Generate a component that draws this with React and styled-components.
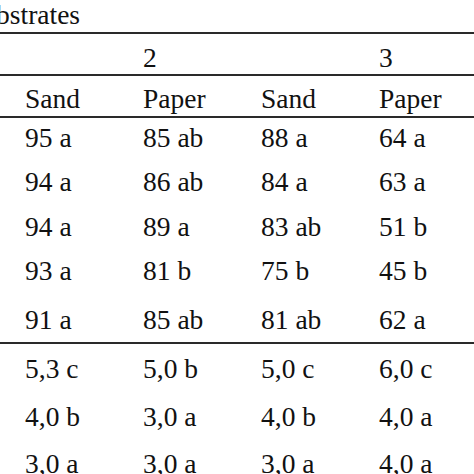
import React from 'react'
import styled, { createGlobalStyle } from 'styled-components'

const GlobalStyle = createGlobalStyle`
    html, body {
        margin: 0;
        padding: 0;
        background: #fff;
    }
    body {
        width: 474px;
        height: 474px;
        overflow: hidden;
        color: #111;
    }
`

const germination = [
    ['95 a', '85 ab', '88 a', '64 a'],
    ['94 a', '86 ab', '84 a', '63 a'],
    ['94 a', '89 a', '83 ab', '51 b'],
    ['93 a', '81 b', '75 b', '45 b'],
    ['91 a', '85 ab', '81 ab', '62 a'],
]

const speed = [
    ['5,3 c', '5,0 b', '5,0 c', '6,0 c'],
    ['4,0 b', '3,0 a', '4,0 b', '4,0 a'],
    ['3,0 a', '3,0 a', '3,0 a', '4,0 a'],
]

const App = () => {
    return (
        <>
            <GlobalStyle />
            <Table>
                <Caption>Substrates</Caption>
                <Row $pt={10} $pb={2}>
                    <Cell />
                    <Cell>2</Cell>
                    <Cell />
                    <Cell>3</Cell>
                </Row>
                <Row $pt={9} $pb={3.3}>
                    <Cell>Sand</Cell>
                    <Cell>Paper</Cell>
                    <Cell>Sand</Cell>
                    <Cell>Paper</Cell>
                </Row>
                <Group $pt={6} $pb={7.8}>
                    {germination.map((row, i) => (
                        <DataRow key={i} $gap={i === 4 ? 21.6 : 16.2}>
                            {row.map((value, j) => <Cell key={j}>{value}</Cell>)}
                        </DataRow>
                    ))}
                </Group>
                <Group $pt={11.2} $pb={0} $last>
                    {speed.map((row, i) => (
                        <DataRow key={i} $gap={i === 0 ? 0 : 19.3}>
                            {row.map((value, j) => <Cell key={j}>{value}</Cell>)}
                        </DataRow>
                    ))}
                </Group>
            </Table>
        </>
    )
}

const Table = styled.div`
    width: 474px;
    display: flex;
    flex-direction: column;
    font-family: 'Liberation Serif', Tinos, 'DejaVu Serif', serif;
    font-size: 27.5px;
    line-height: 28px;
    color: #111;
`

const Caption = styled.div`
    padding: 1px 0 3px;
    margin-left: -33px;
    white-space: nowrap;
    border-bottom: 2px solid #2a2a2a;
`

const Row = styled.div`
    display: grid;
    grid-template-columns: repeat(4, 118px);
    padding: ${p => p.$pt}px 0 ${p => p.$pb}px 25px;
    border-bottom: 2px solid #2a2a2a;
    white-space: nowrap;
`

const Group = styled.div`
    display: flex;
    flex-direction: column;
    padding: ${p => p.$pt}px 0 ${p => p.$pb}px;
    border-bottom: ${p => p.$last ? 'none' : '2px solid #2a2a2a'};
`

const DataRow = styled.div`
    display: grid;
    grid-template-columns: repeat(4, 118px);
    padding-left: 25px;
    white-space: nowrap;
    &:not(:first-child) {
        margin-top: ${p => p.$gap}px;
    }
`

const Cell = styled.div`
    min-height: 28px;
`

export default App
